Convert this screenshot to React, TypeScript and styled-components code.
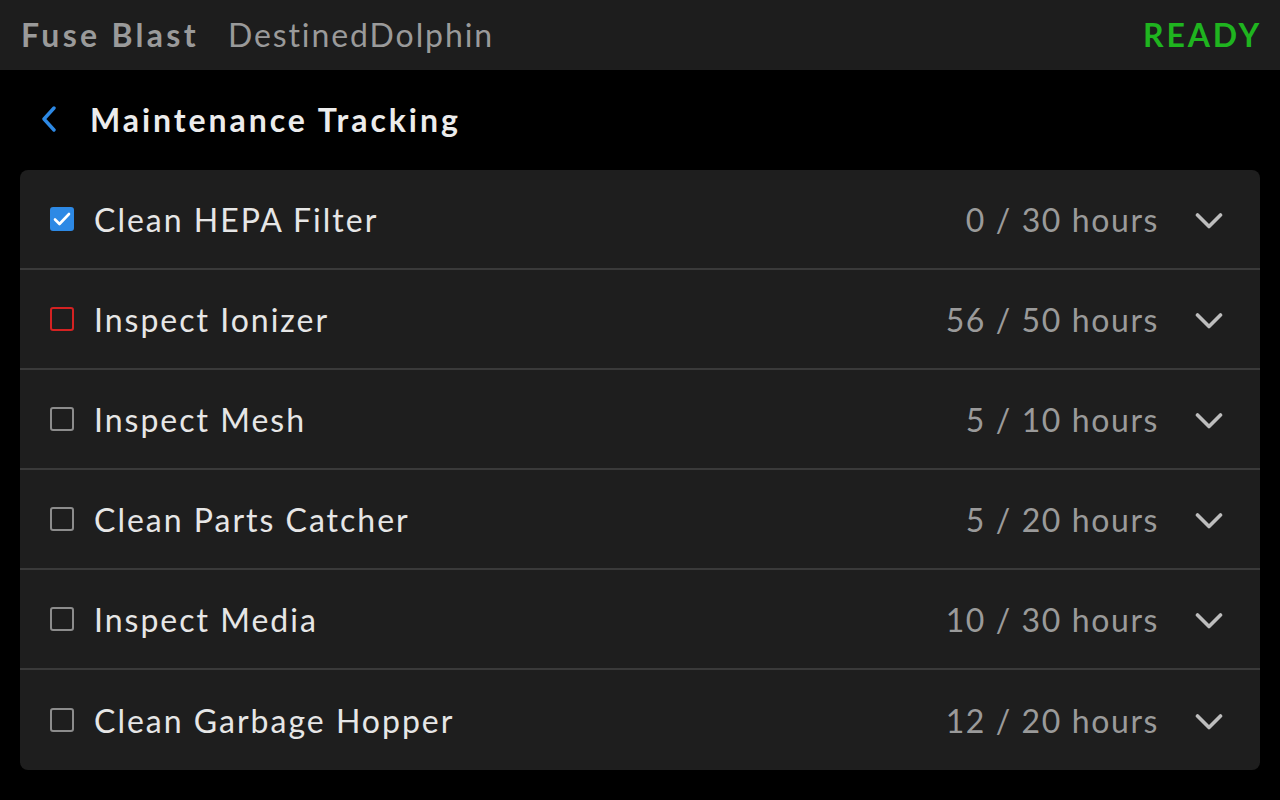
import React from "react";
import styled, { createGlobalStyle } from "styled-components";

const Global = createGlobalStyle`
  html, body { margin: 0; padding: 0; background: #000; }
  body { font-family: Lato, "Noto Sans", sans-serif; -webkit-font-smoothing: antialiased; }
  * { box-sizing: border-box; }
`;

const Page = styled.div`
  width: 1280px;
  height: 800px;
  background: #000;
  display: flex;
  flex-direction: column;
  overflow: hidden;
`;

const TopBar = styled.header`
  height: 70px;
  background: #1d1d1d;
  display: flex;
  align-items: center;
  padding: 0 18px 2px 21px;
  gap: 29px;
`;

const Brand = styled.span`
  font-size: 32px;
  font-weight: 700;
  color: #9a9a9a;
  letter-spacing: 3.3px;
`;

const DeviceName = styled.span`
  font-size: 32px;
  font-weight: 400;
  color: #9a9a9a;
  letter-spacing: 1.9px;
  flex: 1;
`;

const Status = styled.span`
  font-size: 32px;
  font-weight: 700;
  color: #1fb41f;
  letter-spacing: 2.8px;
`;

const TitleRow = styled.div`
  height: 100px;
  display: flex;
  align-items: center;
  padding: 0 0 2px 40px;
  gap: 32px;
`;

const BackButton = styled.button`
  background: none;
  border: none;
  padding: 0;
  display: flex;
  align-items: center;
  cursor: pointer;
`;

const Title = styled.h1`
  margin: 0;
  font-size: 32px;
  font-weight: 700;
  color: #ececec;
  letter-spacing: 2.95px;
`;

const Card = styled.div`
  margin: 0 20px;
  background: #1e1e1e;
  border-radius: 8px;
  display: flex;
  flex-direction: column;
`;

const Row = styled.div`
  height: 100px;
  display: flex;
  align-items: center;
  padding: 0 37px 0 30px;
  border-bottom: 2px solid #3a3a3a;
  &:last-child { border-bottom: none; }
`;

const Box = styled.span<{ $state: "done" | "overdue" | "open" }>`
  width: 24px;
  height: 24px;
  border-radius: 3px;
  flex: none;
  display: flex;
  align-items: center;
  justify-content: center;
  border: 2px solid
    ${(p) => (p.$state === "done" ? "#2d89e5" : p.$state === "overdue" ? "#d42222" : "#8c8c8c")};
  background: ${(p) => (p.$state === "done" ? "#2d89e5" : "transparent")};
`;

const Label = styled.span`
  margin-left: 20px;
  font-size: 32px;
  color: #e6e6e6;
  letter-spacing: 2px;
  flex: 1;
`;

const Hours = styled.span`
  font-size: 32px;
  color: #9a9a9a;
  letter-spacing: 1.6px;
  margin-right: 36px;
`;

const items: { name: string; hours: string; state: "done" | "overdue" | "open" }[] = [
  { name: "Clean HEPA Filter", hours: "0 / 30 hours", state: "done" },
  { name: "Inspect Ionizer", hours: "56 / 50 hours", state: "overdue" },
  { name: "Inspect Mesh", hours: "5 / 10 hours", state: "open" },
  { name: "Clean Parts Catcher", hours: "5 / 20 hours", state: "open" },
  { name: "Inspect Media", hours: "10 / 30 hours", state: "open" },
  { name: "Clean Garbage Hopper", hours: "12 / 20 hours", state: "open" },
];

const Check = () => (
  <svg width="18" height="14" viewBox="0 0 18 14">
    <path d="M2 7.5 L6.5 12 L16 2" fill="none" stroke="#fff" strokeWidth="2.6" strokeLinecap="round" strokeLinejoin="round" />
  </svg>
);

const ChevronDown = () => (
  <svg width="28" height="18" viewBox="0 0 28 18" style={{ marginTop: 3 }}>
    <path d="M2.5 3 L14 14.5 L25.5 3" fill="none" stroke="#bdbdbd" strokeWidth="3.6" strokeLinecap="round" strokeLinejoin="round" />
  </svg>
);

const ChevronLeft = () => (
  <svg width="18" height="26" viewBox="0 0 18 26">
    <path d="M14 2 L4 13 L14 24" fill="none" stroke="#2d89e5" strokeWidth="3.4" strokeLinecap="round" strokeLinejoin="round" />
  </svg>
);

export default function App() {
  return (
    <Page>
      <Global />
      <TopBar>
        <Brand>Fuse Blast</Brand>
        <DeviceName>DestinedDolphin</DeviceName>
        <Status>READY</Status>
      </TopBar>
      <TitleRow>
        <BackButton aria-label="Back">
          <ChevronLeft />
        </BackButton>
        <Title>Maintenance Tracking</Title>
      </TitleRow>
      <Card>
        {items.map((it) => (
          <Row key={it.name}>
            <Box $state={it.state}>{it.state === "done" && <Check />}</Box>
            <Label>{it.name}</Label>
            <Hours>{it.hours}</Hours>
            <ChevronDown />
          </Row>
        ))}
      </Card>
    </Page>
  );
}
